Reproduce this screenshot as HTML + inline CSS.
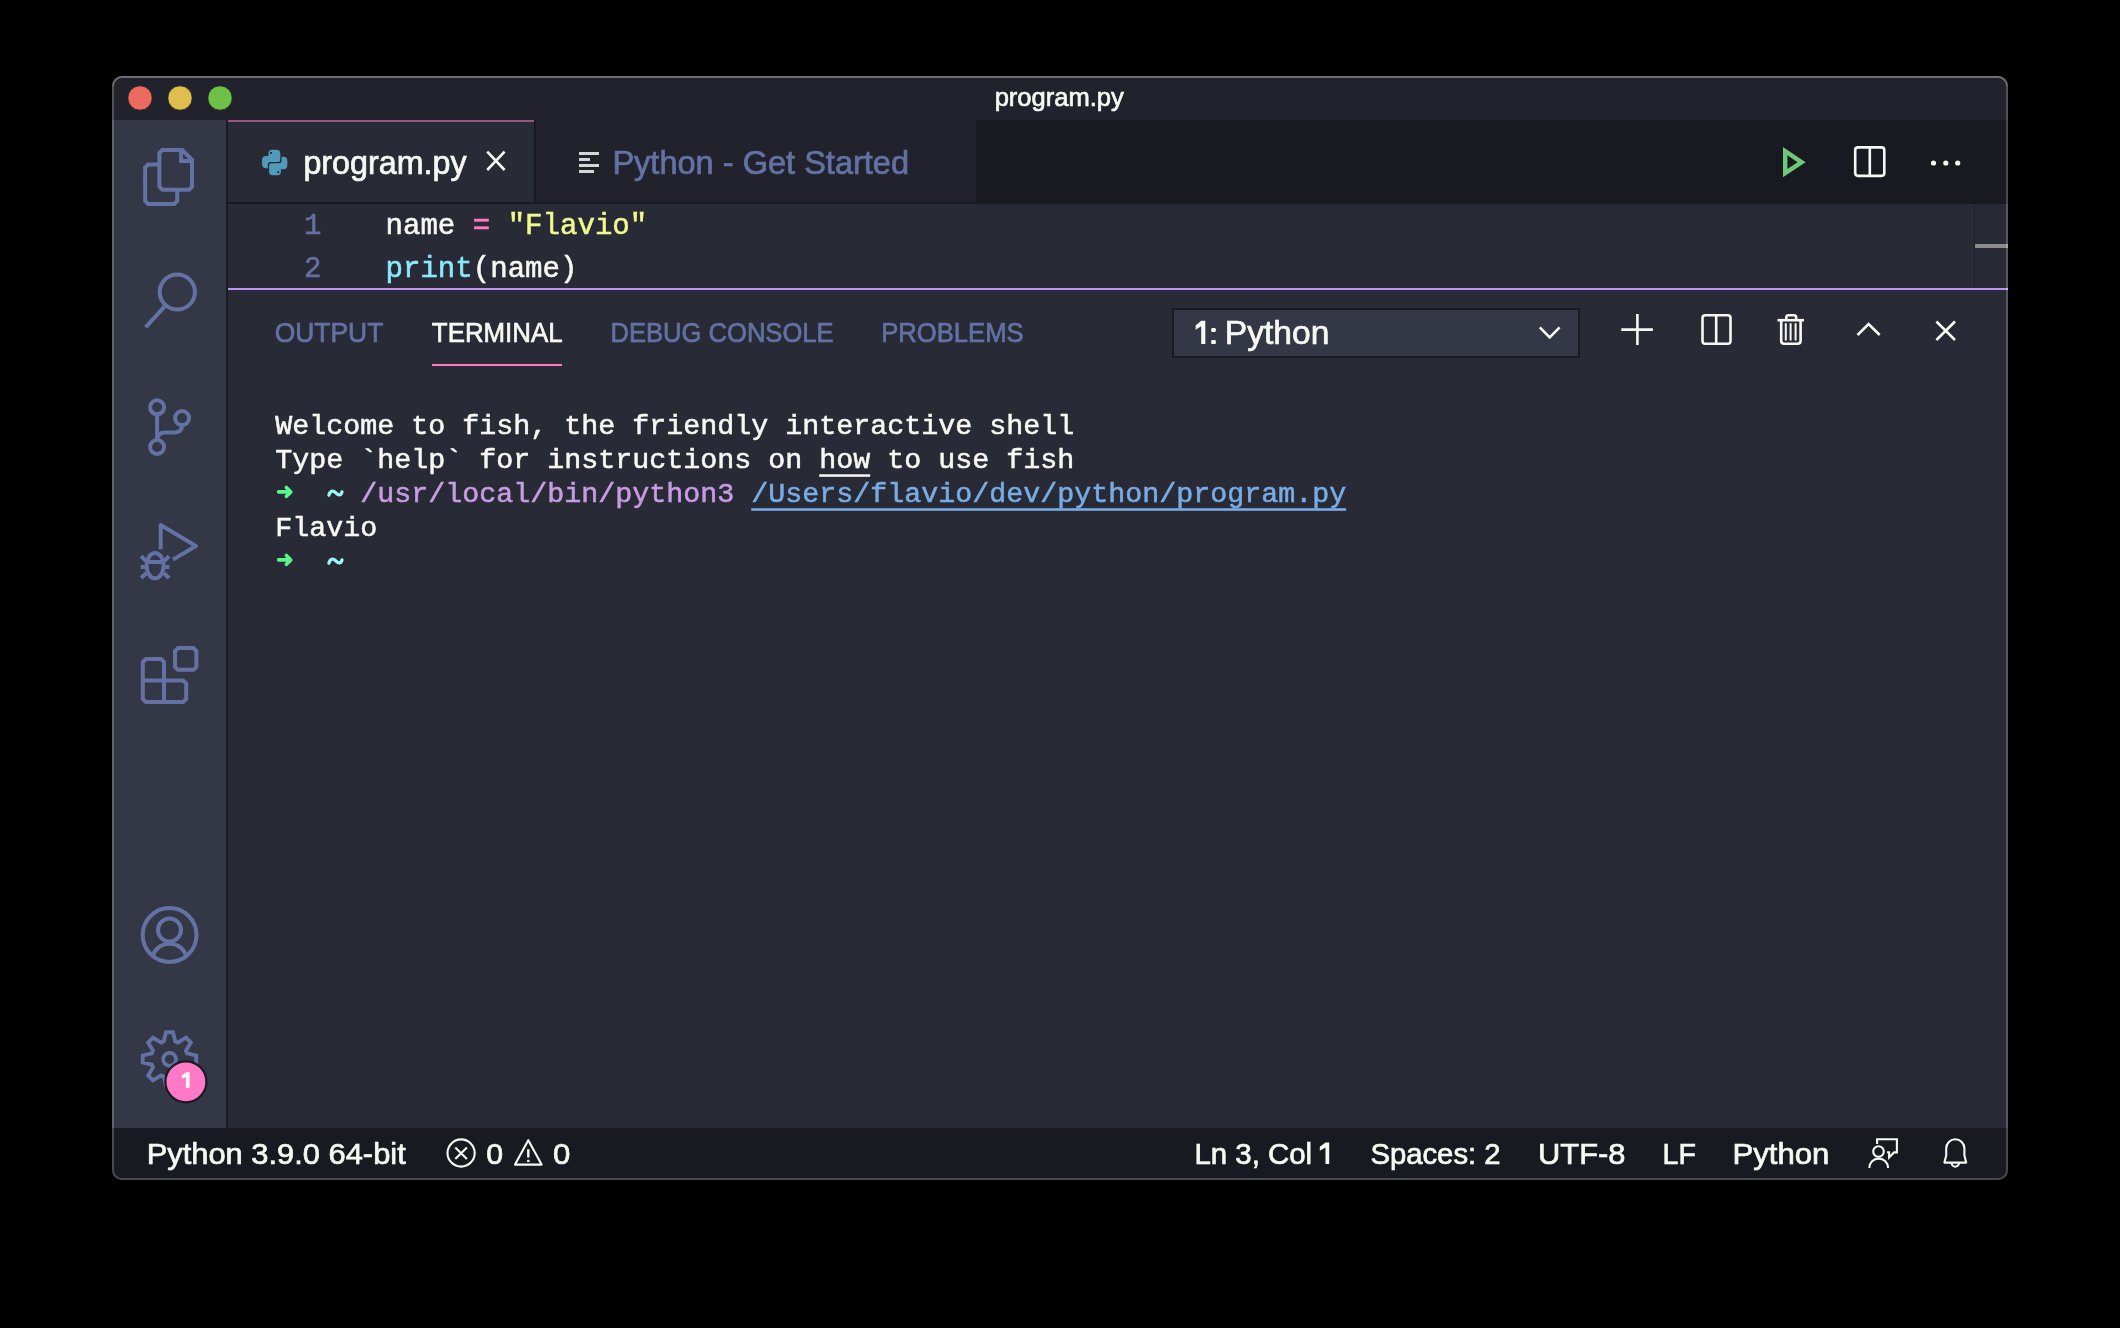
<!DOCTYPE html>
<html><head><meta charset="utf-8"><title>program.py</title>
<style>
html,body{margin:0;padding:0;background:#000;width:2120px;height:1328px;overflow:hidden}
svg{display:block;will-change:transform}
</style></head><body>
<svg width="2120" height="1328" viewBox="0 0 2120 1328">
<defs>
<clipPath id="win"><rect x="112" y="76" width="1896" height="1104" rx="10" ry="10"/></clipPath>
</defs>
<rect x="0" y="0" width="2120" height="1328" fill="#000"/>
<g clip-path="url(#win)">
  <rect x="112" y="76" width="1896" height="1104" fill="#282A36"/>
  <rect x="112" y="76" width="1896" height="44" fill="#21222C"/>
  <rect x="112" y="120" width="114" height="1008" fill="#343746"/>
  <rect x="226" y="120" width="2" height="1008" fill="#1B1C23"/>
  <rect x="228" y="120" width="1780" height="84" fill="#191A21"/>
  <rect x="228" y="120" width="306" height="82" fill="#282A36"/>
  <rect x="228" y="120" width="306" height="2" fill="#9A5283"/>
  <rect x="536" y="120" width="440" height="82" fill="#21222C"/>
  <rect x="228" y="204" width="1780" height="84" fill="#282A36"/>
  <rect x="1974" y="204" width="1" height="84" fill="#1E1F28"/>
  <rect x="1975" y="244" width="33" height="4" fill="#8C8C8C"/>
  <rect x="228" y="288" width="1780" height="2" fill="#BD93F9"/>
  <rect x="228" y="290" width="1780" height="838" fill="#282A36"/>
  <rect x="112" y="1128" width="1896" height="52" fill="#191A21"/>
</g>
<circle cx="140" cy="98" r="12.2" fill="#EC6A5E" stroke="#1c1d26" stroke-width="0.8"/>
<circle cx="180" cy="98" r="12.2" fill="#DFBE4E" stroke="#1c1d26" stroke-width="0.8"/>
<circle cx="220" cy="98" r="12.2" fill="#6FC046" stroke="#1c1d26" stroke-width="0.8"/>
<text x="994.63" y="106.00" font-family='"Liberation Sans"' font-size="26" fill="#F8F8F2" stroke="#F8F8F2" stroke-width="0.7" textLength="129.17" lengthAdjust="spacingAndGlyphs" >program.py</text>
<text x="303.41" y="174.00" font-family='"Liberation Sans"' font-size="32.5" fill="#F8F8F2" stroke="#F8F8F2" stroke-width="0.7" textLength="163.26" lengthAdjust="spacingAndGlyphs" >program.py</text>
<text x="612.40" y="174.20" font-family='"Liberation Sans"' font-size="32.5" fill="#6272A4" stroke="#6272A4" stroke-width="0.7" textLength="296.67" lengthAdjust="spacingAndGlyphs" >Python - Get Started</text>
<text x="304.00" y="233.50" font-family='"Liberation Mono"' font-size="29.08" fill="#6272A4" stroke="#6272A4" stroke-width="0.55" xml:space="preserve" >1</text>
<text x="304.00" y="277.20" font-family='"Liberation Mono"' font-size="29.08" fill="#6272A4" stroke="#6272A4" stroke-width="0.55" xml:space="preserve" >2</text>
<text x="385.5" y="233.5" font-family='"Liberation Mono"' font-size="29.08" stroke-width="0.55" xml:space="preserve"><tspan fill="#F8F8F2" stroke="#F8F8F2">name </tspan><tspan fill="#FF79C6" stroke="#FF79C6">=</tspan><tspan fill="#F8F8F2" stroke="#F8F8F2"> </tspan><tspan fill="#F1FA8C" stroke="#F1FA8C">"Flavio"</tspan></text>
<text x="385.5" y="277.2" font-family='"Liberation Mono"' font-size="29.08" stroke-width="0.55" xml:space="preserve"><tspan fill="#8BE9FD" stroke="#8BE9FD">print</tspan><tspan fill="#F8F8F2" stroke="#F8F8F2">(name)</tspan></text>
<text x="274.77" y="342.20" font-family='"Liberation Sans"' font-size="28" fill="#6272A4" stroke="#6272A4" stroke-width="0.7" textLength="108.49" lengthAdjust="spacingAndGlyphs" >OUTPUT</text>
<text x="431.85" y="342.20" font-family='"Liberation Sans"' font-size="28" fill="#F8F8F2" stroke="#F8F8F2" stroke-width="0.7" textLength="130.76" lengthAdjust="spacingAndGlyphs" >TERMINAL</text>
<text x="610.49" y="342.20" font-family='"Liberation Sans"' font-size="28" fill="#6272A4" stroke="#6272A4" stroke-width="0.7" textLength="223.09" lengthAdjust="spacingAndGlyphs" >DEBUG CONSOLE</text>
<text x="881.29" y="342.20" font-family='"Liberation Sans"' font-size="28" fill="#6272A4" stroke="#6272A4" stroke-width="0.7" textLength="142.30" lengthAdjust="spacingAndGlyphs" >PROBLEMS</text>
<rect x="432" y="364" width="130" height="2" fill="#FF79C6"/>
<rect x="1173" y="309" width="406" height="48" fill="#343746" stroke="#191A21" stroke-width="2"/>
<text x="1224.85" y="344.20" font-family='"Liberation Sans"' font-size="33" fill="#F8F8F2" stroke="#F8F8F2" stroke-width="0.7" textLength="104.52" lengthAdjust="spacingAndGlyphs" >Python</text>
<path d="M1201.2 320.8 H1205.3 V344 H1201.2 V326.2 L1195.6 329.8 V325.6 Z" fill="#F8F8F2"/>
<rect x="1211.2" y="328" width="4.6" height="4" rx="1.2" fill="#F8F8F2"/><rect x="1211.2" y="340.1" width="4.6" height="4" rx="1.2" fill="#F8F8F2"/>
<text x="275.20" y="433.50" font-family='"Liberation Mono"' font-size="28.333" fill="#F8F8F2" stroke="#F8F8F2" stroke-width="0.55" xml:space="preserve" >Welcome to fish, the friendly interactive shell</text>
<text x="275.20" y="467.50" font-family='"Liberation Mono"' font-size="28.333" fill="#F8F8F2" stroke="#F8F8F2" stroke-width="0.55" xml:space="preserve" >Type `help` for instructions on how to use fish</text>
<rect x="819.2" y="474.3" width="51" height="2.5" fill="#F8F8F2"/>
<text x="275.20" y="501.5" font-family='"Liberation Mono"' font-size="28.333" stroke-width="0.55" xml:space="preserve"><tspan fill="#50FA7B" stroke="#50FA7B">   </tspan>  <tspan fill="#C99BE2" stroke="#C99BE2">/usr/local/bin/python3</tspan> <tspan fill="#79ACE4" stroke="#79ACE4">/Users/flavio/dev/python/program.py</tspan></text>
<rect x="751.2" y="508.2" width="595" height="2.6" fill="#79ACE4"/>
<text x="275.20" y="535.50" font-family='"Liberation Mono"' font-size="28.333" fill="#F8F8F2" stroke="#F8F8F2" stroke-width="0.55" xml:space="preserve" >Flavio</text>
<text x="275.20" y="569.5" font-family='"Liberation Mono"' font-size="28.333" stroke-width="0.55" xml:space="preserve"><tspan fill="#50FA7B" stroke="#50FA7B">   </tspan> </text>
<text x="146.69" y="1164.00" font-family='"Liberation Sans"' font-size="29.5" fill="#F8F8F2" stroke="#F8F8F2" stroke-width="0.7" textLength="259.05" lengthAdjust="spacingAndGlyphs" >Python 3.9.0 64-bit</text>
<text x="486.27" y="1164.00" font-family='"Liberation Sans"' font-size="29.5" fill="#F8F8F2" stroke="#F8F8F2" stroke-width="0.7" textLength="16.87" lengthAdjust="spacingAndGlyphs" >0</text>
<text x="553.04" y="1164.00" font-family='"Liberation Sans"' font-size="29.5" fill="#F8F8F2" stroke="#F8F8F2" stroke-width="0.7" textLength="17.33" lengthAdjust="spacingAndGlyphs" >0</text>
<text x="1194.41" y="1164.00" font-family='"Liberation Sans"' font-size="29.5" fill="#F8F8F2" stroke="#F8F8F2" stroke-width="0.7" textLength="117.76" lengthAdjust="spacingAndGlyphs" >Ln 3, Col</text>
<path d="M1325.5 1142.6 H1329.2 V1164 H1325.5 V1147.4 L1319.8 1150.8 V1146.8 Z" fill="#F8F8F2"/>
<text x="1370.41" y="1164.00" font-family='"Liberation Sans"' font-size="29.5" fill="#F8F8F2" stroke="#F8F8F2" stroke-width="0.7" textLength="130.17" lengthAdjust="spacingAndGlyphs" >Spaces: 2</text>
<text x="1538.10" y="1164.00" font-family='"Liberation Sans"' font-size="29.5" fill="#F8F8F2" stroke="#F8F8F2" stroke-width="0.7" textLength="87.22" lengthAdjust="spacingAndGlyphs" >UTF-8</text>
<text x="1662.58" y="1164.00" font-family='"Liberation Sans"' font-size="29.5" fill="#F8F8F2" stroke="#F8F8F2" stroke-width="0.7" textLength="33.31" lengthAdjust="spacingAndGlyphs" >LF</text>
<text x="1732.47" y="1164.00" font-family='"Liberation Sans"' font-size="29.5" fill="#F8F8F2" stroke="#F8F8F2" stroke-width="0.7" textLength="96.98" lengthAdjust="spacingAndGlyphs" >Python</text>
<g fill="none" stroke="#6272A4" stroke-width="4" stroke-linejoin="miter">
<path d="M162.4 150 H182.2 L192 159.8 V186.7 L189 189.7 H162.4 L159.4 186.7 V153 Z"/>
<path d="M181.1 150 V160.9 H192" stroke-linejoin="miter"/>
<path d="M159.4 164.6 H148.1 L145.1 167.6 V201 L148.1 204 H174.2 L177.2 201 V189.7"/>
<circle cx="177.3" cy="292" r="17.6"/>
<path d="M165.8 305.2 L145.6 327.4"/>
<circle cx="157.1" cy="407.3" r="7"/>
<circle cx="157.1" cy="447" r="7"/>
<circle cx="182.1" cy="418.1" r="7"/>
<path d="M157.1 414.3 V440"/>
<path d="M182.1 425.1 Q182.1 432.4 174.6 432.4 H165.5 Q157.1 432.4 157.1 440"/>
<path d="M160.7 549.2 V525 L196 546 L173 559.6" stroke-linejoin="round"/>
<ellipse cx="155.1" cy="565.6" rx="8.5" ry="12.7"/>
<path d="M146.6 562 H163.6 M141.1 556.1 L146.3 561.2 M140.8 567.1 H145 M141.1 578 L146.3 573.3 M169.1 556.1 L163.9 561.2 M169.4 567.1 H165.2 M169.1 578 L163.9 573.3"/>
<path d="M178 648 H193.4 L196.4 651 V666.8 L193.4 669.8 H178 L175 666.8 V651 Z"/>
<path d="M145.8 659 H161 L164 662 V680.6 H183.2 L186.2 683.6 V699 L183.2 702 H145.8 L142.8 699 V662 Z"/>
<path d="M142.8 680.6 H164 V702"/>
<circle cx="169.6" cy="935" r="26.9"/>
<circle cx="169.5" cy="930" r="11.5"/>
<path d="M152.5 957 A17.5 17.5 0 0 1 186.5 957"/>
<path d="M163.78 1041.41 L165.98 1032.23 L173.02 1032.23 L175.22 1041.41 L177.90 1042.52 L185.94 1037.58 L190.92 1042.56 L185.98 1050.60 L187.09 1053.28 L196.27 1055.48 L196.27 1062.52 L187.09 1064.72 L185.98 1067.40 L190.92 1075.44 L185.94 1080.42 L177.90 1075.48 L175.22 1076.59 L173.02 1085.77 L165.98 1085.77 L163.78 1076.59 L161.10 1075.48 L153.06 1080.42 L148.08 1075.44 L153.02 1067.40 L151.91 1064.72 L142.73 1062.52 L142.73 1055.48 L151.91 1053.28 L153.02 1050.60 L148.08 1042.56 L153.06 1037.58 L161.10 1042.52 Z" stroke-width="3.8"/>
<circle cx="169.6" cy="1059.3" r="6.5" stroke-width="3.7"/>
</g>
<circle cx="185.9" cy="1081.8" r="20.5" fill="#FF79C6" stroke="#1A1B22" stroke-width="2.2"/>
<path d="M185.9 1072.2 H189.6 V1087.8 H185.9 V1077 L181.8 1078.8 V1075.2 Z" fill="#F8F8F2"/>
<g transform="translate(258 146)"><g fill="#519ABA"><path d="M10.5 9.9 V7.3 Q10.5 3.8 14 3.8 H18.8 Q22.3 3.8 22.3 7.3 V13.4 Q22.3 15.9 19.8 15.9 H12.3 Q9.8 15.9 9.8 18.4 V22.3 H8.1 Q4.1 22.3 4.1 18.3 V13.9 Q4.1 9.9 8.1 9.9 Z"/><path d="M10.5 9.9 V7.3 Q10.5 3.8 14 3.8 H18.8 Q22.3 3.8 22.3 7.3 V13.4 Q22.3 15.9 19.8 15.9 H12.3 Q9.8 15.9 9.8 18.4 V22.3 H8.1 Q4.1 22.3 4.1 18.3 V13.9 Q4.1 9.9 8.1 9.9 Z" transform="rotate(180 16.7 16.55)"/></g><rect x="12.2" y="6" width="1.9" height="1.9" fill="#282A36"/><rect x="19.3" y="25.2" width="1.9" height="1.9" fill="#282A36"/></g>
<g stroke="#F8F8F2" stroke-width="2.6"><path d="M487.2 151.6 L504.6 170 M504.6 151.6 L487.2 170"/></g>
<g fill="#D4D7D6"><rect x="579" y="152" width="20" height="3"/><rect x="579" y="158" width="11" height="3"/><rect x="579" y="164" width="20" height="3"/><rect x="579" y="170" width="15" height="3"/></g>
<path d="M1783 147 L1805.6 162.2 L1783 177.3 Z M1787.4 155.3 V169.1 L1797.6 162.2 Z" fill="#6FC77A" fill-rule="evenodd"/>
<g fill="none" stroke="#F8F8F2" stroke-width="2.6"><rect x="1855.2" y="147.4" width="29.1" height="28.5" rx="2.8"/><path d="M1869.8 147.4 V175.9"/></g>
<g fill="#F8F8F2"><circle cx="1933.5" cy="163" r="2.6"/><circle cx="1945.8" cy="163" r="2.6"/><circle cx="1957.7" cy="163" r="2.6"/></g>
<g fill="none" stroke="#F8F8F2" stroke-width="2.6">
<path d="M1621.3 329.6 H1652.9 M1637.4 314 V345.1"/>
<rect x="1702.5" y="315.3" width="28" height="28.4" rx="2.8"/><path d="M1716.2 315.3 V343.7"/>
<path d="M1777.5 320.2 H1804"/>
<path d="M1786.3 320 V317.5 Q1786.3 315.3 1788.5 315.3 H1794 Q1796.2 315.3 1796.2 317.5 V320"/>
<path d="M1781.2 320.2 V340.8 Q1781.2 343.8 1784.2 343.8 H1797.6 Q1800.6 343.8 1800.6 340.8 V320.2"/>
<path d="M1785.8 323.3 V340.5 M1790.6 323.3 V340.5 M1795.6 323.3 V340.5" stroke-width="2"/>
<path d="M1857.5 335 L1868.6 324 L1879.7 335"/>
<path d="M1936.4 321.5 L1955 340 M1955 321.5 L1936.4 340"/>
<path d="M1539.8 327.4 L1549.7 337.3 L1559.6 327.4"/>
</g>
<g fill="none" stroke="#F8F8F2" stroke-width="2.1">
<circle cx="461.1" cy="1153" r="13.6"/>
<path d="M455.3 1147.4 L466.9 1159 M466.9 1147.4 L455.3 1159"/>
<path d="M528.3 1140.2 L541.6 1164.6 H515 Z" stroke-linejoin="round"/>
<path d="M1877.1 1143.9 V1139.2 H1896.9 V1152.4 H1894 L1889.1 1157.4 V1152.2 H1887"/>
<circle cx="1878.5" cy="1151.5" r="5.3"/>
<path d="M1869.3 1168 A9.4 9.4 0 0 1 1888.1 1168"/>
<path d="M1944.4 1162.6 L1946.2 1155.5 V1148.4 A9.1 9.1 0 0 1 1964.4 1148.4 V1155.5 L1966.2 1162.6 Z" stroke-linejoin="round"/>
<path d="M1951.6 1163 A3.7 3.7 0 0 0 1959 1163"/>
</g>
<g fill="#F8F8F2"><rect x="527.1" y="1149.2" width="2.4" height="8.3"/><rect x="527.1" y="1159.8" width="2.4" height="2.2"/></g>
<g fill="none" stroke="#5AF78E" stroke-width="3.6" stroke-linecap="round" stroke-linejoin="round"><path d="M278.6 491.9 H290.3 M286.4 487.5 L290.8 491.9 L286.4 496.3"/></g>
<g fill="none" stroke="#5AF78E" stroke-width="3.6" stroke-linecap="round" stroke-linejoin="round"><path d="M278.6 559.9 H290.3 M286.4 555.5 L290.8 559.9 L286.4 564.3"/></g>
<path d="M328.9 495.2 C330 490.8 333 489.9 335.5 492.6 C338 495.3 341 496.2 342 491.9" fill="none" stroke="#9CF6F4" stroke-width="3.3" stroke-linecap="round"/>
<path d="M328.9 563.2 C330 558.8 333 557.9 335.5 560.6 C338 563.3 341 564.2 342 559.9" fill="none" stroke="#9CF6F4" stroke-width="3.3" stroke-linecap="round"/>
<rect x="113" y="77" width="1894" height="1102" rx="9" ry="9" fill="none" stroke="rgba(255,255,255,0.21)" stroke-width="2"/>
<path d="M113 86 A9 9 0 0 1 122 77 H1998 A9 9 0 0 1 2007 86" fill="none" stroke="rgba(255,255,255,0.17)" stroke-width="2"/>
</svg>
</body></html>
